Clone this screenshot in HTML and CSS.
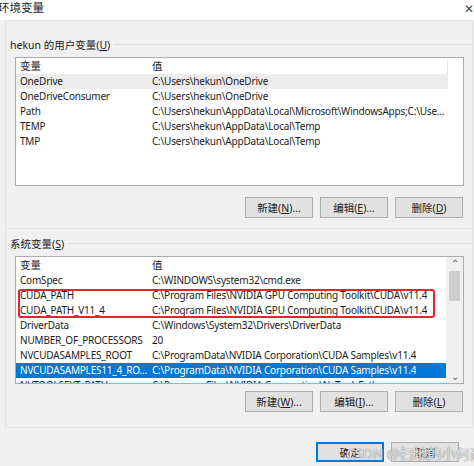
FILE: index.html
```html
<!DOCTYPE html>
<html lang="zh-CN">
<head>
    <meta charset="UTF-8">
    <title>环境变量</title>
    <link rel="stylesheet" href="styles.css">
</head>
<body>
    <div class="titlebar">
        <span class="title">环境变量</span>
        <span class="close">✕</span>
    </div>

    <!-- 用户变量 -->
    <div class="section user">
        <div class="legend"><span>hekun 的用户变量(<u>U</u>)</span><i class="rule"></i></div>
        <div class="listbox">
            <div class="rows">
                <div class="row head"><span class="name">变量</span><span class="value">值</span></div>
                <div class="row hover"><span class="name">OneDrive</span><span class="value">C:\Users\hekun\OneDrive</span></div>
                <div class="row"><span class="name">OneDriveConsumer</span><span class="value">C:\Users\hekun\OneDrive</span></div>
                <div class="row"><span class="name">Path</span><span class="value">C:\Users\hekun\AppData\Local\Microsoft\WindowsApps;C:\Use...</span></div>
                <div class="row"><span class="name">TEMP</span><span class="value">C:\Users\hekun\AppData\Local\Temp</span></div>
                <div class="row"><span class="name">TMP</span><span class="value">C:\Users\hekun\AppData\Local\Temp</span></div>
            </div>
        </div>
        <div class="buttons">
            <button>新建(<u>N</u>)...</button>
            <button>编辑(<u>E</u>)...</button>
            <button>删除(<u>D</u>)</button>
        </div>
    </div>

    <!-- 系统变量 -->
    <div class="section system">
        <div class="legend"><span>系统变量(<u>S</u>)</span><i class="rule"></i></div>
        <div class="listbox scrolling">
            <div class="rows">
                <div class="row head"><span class="name">变量</span><span class="value">值</span></div>
                <div class="row"><span class="name">ComSpec</span><span class="value">C:\WINDOWS\system32\cmd.exe</span></div>
                <div class="row"><span class="name">CUDA_PATH</span><span class="value">C:\Program Files\NVIDIA GPU Computing Toolkit\CUDA\v11.4</span></div>
                <div class="row"><span class="name">CUDA_PATH_V11_4</span><span class="value">C:\Program Files\NVIDIA GPU Computing Toolkit\CUDA\v11.4</span></div>
                <div class="row"><span class="name">DriverData</span><span class="value">C:\Windows\System32\Drivers\DriverData</span></div>
                <div class="row"><span class="name">NUMBER_OF_PROCESSORS</span><span class="value">20</span></div>
                <div class="row"><span class="name">NVCUDASAMPLES_ROOT</span><span class="value">C:\ProgramData\NVIDIA Corporation\CUDA Samples\v11.4</span></div>
                <div class="row selected"><span class="name">NVCUDASAMPLES11_4_RO...</span><span class="value">C:\ProgramData\NVIDIA Corporation\CUDA Samples\v11.4</span></div>
                <div class="row"><span class="name">NVTOOLSEXT_PATH</span><span class="value">C:\Program Files\NVIDIA Corporation\NvToolsExt\</span></div>
            </div>
            <div class="scrollbar">
                <span class="arrow">&#8963;</span>
                <div class="track"><div class="thumb"></div></div>
                <span class="arrow">&#8964;</span>
            </div>
            <div class="mark"></div>
        </div>
        <div class="buttons">
            <button>新建(<u>W</u>)...</button>
            <button>编辑(<u>I</u>)...</button>
            <button>删除(<u>L</u>)</button>
        </div>
    </div>

    <div class="footer">
        <button class="default">确定</button>
        <button>取消</button>
    </div>

    <div class="watermark">CSDN @扫地的小何尚</div>
</body>
</html>
```

FILE: styles.css
```css
body {
    margin: 0;
    width: 474px;
    height: 466px;
    overflow: hidden;
    position: relative;
    background-color: #f0f0f0;
    font-family: "Noto Sans", "Noto Sans CJK SC", sans-serif;
    font-size: 10px;
    color: #1b1b1b;
}
.titlebar {
    height: 20px;
    background: #fff;
    display: flex;
    align-items: flex-start;
    justify-content: space-between;
    line-height: 15px;
}
.title {
    margin-left: -2px;
    font-size: 11.5px;
    font-family: "Noto Sans CJK SC", sans-serif;
}
.close {
    font-size: 12px;
    color: #444;
    margin-top: 1px;
}
.section {
    margin-left: 5px;
    width: 468px;
    box-sizing: border-box;
    border: 1px solid #e2e2e2;
}
.section.user {
    padding: 16px 0 10px 0;
}
.section.system {
    border-top: none;
    padding: 7px 0 15px 0;
}
.legend {
    height: 14px;
    display: flex;
    align-items: center;
    gap: 4px;
    padding-left: 4px;
    font-size: 10.5px;
}
.legend .rule {
    flex: 1;
    height: 1px;
    background: #dcdcdc;
}
.listbox {
    position: relative;
    margin: 6px 0 0 9px;
    width: 449px;
    height: 129px;
    box-sizing: border-box;
    border: 1px solid #adadad;
    background: #fff;
    overflow: hidden;
    display: flex;
}
.listbox.scrolling {
    height: 128px;
}
.rows {
    width: 432px;
    padding-top: 1px;
    letter-spacing: -0.2px;
}
.scrolling .rows {
    width: 430px;
}
.row {
    display: flex;
    height: 15px;
    line-height: 15px;
    white-space: nowrap;
}
.row .name {
    width: 132px;
    padding-left: 4px;
    flex-shrink: 0;
    overflow: hidden;
}
.row .value {
    overflow: hidden;
}
.row.head {
    font-size: 10.5px;
    letter-spacing: 0;
}
.user .row.head {
    border-right: 1px solid #e5e5e5;
}
.row.hover {
    background: #ececec;
}
.row.selected {
    background: #0078d7;
    color: #fff;
    width: 432px;
}
.scrollbar {
    width: 17px;
    background: #f0f0f0;
    display: flex;
    flex-direction: column;
    align-items: center;
}
.scrollbar .arrow {
    height: 13px;
    line-height: 13px;
    font-size: 10px;
    color: #606060;
}
.scrollbar .track {
    flex: 1;
    width: 100%;
    padding-top: 1px;
}
.scrollbar .thumb {
    margin: 0 3px;
    height: 30px;
    background: #cdcdcd;
}
.mark {
    position: absolute;
    left: 2px;
    top: 32px;
    width: 417px;
    height: 29px;
    box-sizing: border-box;
    border: 2px solid #e8232b;
    border-radius: 3px;
}
.buttons {
    display: flex;
    justify-content: flex-end;
    gap: 7px;
    padding-right: 9px;
    margin-top: 11px;
}
.system .buttons {
    margin-top: 7px;
}
button {
    width: 68px;
    height: 21px;
    padding: 0;
    background: #e1e1e1;
    border: 1px solid #adadad;
    font-family: "Noto Sans", "Noto Sans CJK SC", sans-serif;
    font-size: 10.5px;
    color: #222;
}
.footer {
    display: flex;
    justify-content: flex-end;
    gap: 7px;
    padding-right: 15px;
    margin-top: 14px;
}
.footer button {
    height: 20px;
}
.footer .default {
    border-color: #0078d7;
    box-shadow: inset 0 0 0 1px #0078d7;
}
.watermark {
    position: absolute;
    left: 346px;
    top: 443px;
    font-family: "Noto Sans", "Noto Sans CJK SC", sans-serif;
    font-size: 14px;
    color: rgba(255, 255, 255, 0.75);
    text-shadow: 0 0 1px #888, 0 0 1px #888;
    white-space: nowrap;
}
```
